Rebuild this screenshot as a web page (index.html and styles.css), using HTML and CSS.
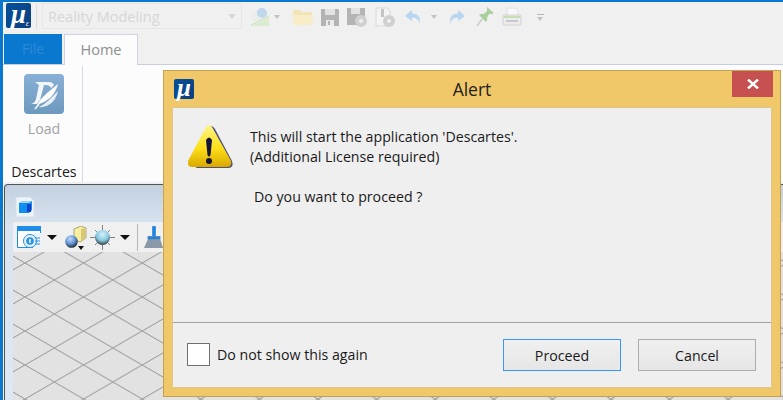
FILE: index.html
```html
<!DOCTYPE html>
<html lang="en">
<head>
<meta charset="utf-8">
<title>Alert</title>
<link rel="stylesheet" href="styles.css">
</head>
<body>
<div class="app">
  <div class="qat">
    <div class="logo logo-main"><span class="mu">μ</span><span class="eps">ε</span></div>
    <div class="qat-sep"></div>
    <div class="combo"><span>Reality Modeling</span><i class="combo-caret"></i></div>
    <div class="qat-icons">
      <svg class="ic w20" viewBox="0 0 20 20"><path d="M1 19 L19 10 V19Z" fill="#dcecd0"/><path d="M1 18L19 9" stroke="#c6deb6"/><path d="M2 7l6-2M2 10l6-2M3 13l6-2" stroke="#e2ebde" stroke-width="1.300"/><circle cx="12" cy="6" r="5" fill="#c0d7ec"/></svg>
      <i class="caret c1"></i>
      <svg class="ic w20 m1" viewBox="0 0 20 20"><path d="M0 4q0-1 1-1h6l2 2h9q1 0 1 1v11H1Z" fill="#f3e3b8"/><path d="M0 8h20v8q0 2-2 2H2q-2 0-2-2Z" fill="#f8ecc9"/></svg>
      <svg class="ic w20 m2" viewBox="0 0 20 20"><path d="M1 2h17l1 1v16H1Z" fill="#b4b4b4"/><path d="M5 2h10v6H5Z" fill="#e2e2e2"/><path d="M6 13h8v6H6Z" fill="#ececec"/><path d="M8 14h2v4H8Z" fill="#b4b4b4"/></svg>
      <svg class="ic w20 m3" viewBox="0 0 20 20"><path d="M0 1h18v17H0Z" fill="#b4b4b4"/><path d="M4 1h9v6H4Z" fill="#e2e2e2"/><circle cx="14" cy="14" r="6" fill="#d0d0d0"/><circle cx="14" cy="14" r="2" fill="#f0f0f0"/></svg>
      <svg class="ic w20 m4" viewBox="0 0 20 20"><path d="M1 1h11l3 3v15H1Z" fill="#f4f4f4" stroke="#d8d8d8"/><path d="M6 2h3v8H6Z" fill="#c4c4c4"/><circle cx="14" cy="14" r="6" fill="#d0d0d0"/><circle cx="14" cy="14" r="2" fill="#f0f0f0"/></svg>
      <svg class="ic w16 m5" viewBox="0 0 16 16"><path d="M7 1 L0 7 L7 12 V8.500 Q13 8 15 15 Q16 4 7 4.500Z" fill="#b8d6ef"/></svg>
      <i class="caret c2"></i>
      <svg class="ic w16 m6" viewBox="0 0 16 16"><path d="M9 1 L16 7 L9 12 V8.500 Q3 8 1 15 Q0 4 9 4.500Z" fill="#b8d6ef"/></svg>
      <svg class="ic w20 m7" viewBox="0 0 20 20"><path d="M11 0l7 6-2 1-3 0-2 4q1 2-1 4L3 8q3-2 5-1l3-3Z" fill="#abd09e"/><path d="M6 12L1 19" stroke="#d0d0d0" stroke-width="2"/></svg>
      <svg class="ic w20 m8" viewBox="0 0 20 20"><path d="M5 1h8l3 3v5H5Z" fill="#f8f8f8" stroke="#e0e0e0"/><path d="M1 9q0-1 1-1h16q1 0 1 1v8q0 1-1 1H2q-1 0-1-1Z" fill="#ececec" stroke="#d2d2d2"/><path d="M2 9h16v2H2Z" fill="#c4dfb6"/><path d="M4 14h12" stroke="#bbb" stroke-width="1.500"/></svg>
      <div class="overflow"><b></b><i class="caret c3"></i></div>
    </div>
  </div>
  <div class="tabs">
    <div class="tab-file">File</div>
    <div class="tab-home">Home</div>
  </div>
  <div class="ribbon">
    <div class="group">
      <div class="load-btn">
        <svg class="load-ic" viewBox="0 0 40 40"><defs><linearGradient id="lg" x1="0" y1="0" x2="0" y2="1"><stop offset="0" stop-color="#88b0d6"/><stop offset="1" stop-color="#6e99bf"/></linearGradient></defs><rect width="40" height="40" rx="4" fill="url(#lg)"/><path d="M11 8h13q5 0 6 3l-3 3q-1-3-5-3h-2l-4 15-3 4H7q4-1 5-5l3-14Z" fill="#f4f7fa"/><path d="M13 31q4-7 10-12l11-9q-2 8-8 14-6 5-13 7Z" fill="#fff"/><path d="M15 33q6-3 10-7l9-9q-2 9-8 13-5 4-11 3Z" fill="#e6edf4"/><path d="M11 35l4-5" stroke="#fff" stroke-width="1.500"/></svg>
        <div class="load-text">Load</div>
      </div>
      <div class="group-title">Descartes</div>
    </div>
  </div>
  <div class="workspace">
    <div class="view-head">
      <svg class="cube" viewBox="0 0 20 20"><path d="M1 0h14l4 4v16H1Z" fill="#eef3f8" stroke="#d8e0e8"/><path d="M4 6l4-2h9v9l-3 3H4Z" fill="#0f8ff0"/><path d="M12 7h4v8h-4Z" fill="#1640c8"/><path d="M4 6l4-2h9l-3 2Z" fill="#9cd4f8"/></svg>
    </div>
    <div class="view-body">
      <div class="view-tools">
        <svg class="vt v1" viewBox="0 0 25 22"><path d="M.5 1.500h23v20H.5Z" fill="#fff" stroke="#1e8de8"/><path d="M0 0h24v5H0Z" fill="#1e8de8"/><path d="M16 7h8v15H16Z" fill="#eaf4fc"/><circle cx="13" cy="15" r="6.500" fill="#e6f3fd" stroke="#2c90e0"/><circle cx="13" cy="15" r="3.800" fill="#2a8fe6"/><path d="M13 13v4" stroke="#fff" stroke-width="1.500"/><path d="M18 12h5M18 15h5M18 18h5" stroke="#2c90e0"/></svg>
        <i class="drop d1"></i>
        <svg class="vt v2" viewBox="0 0 22 22"><defs><radialGradient id="sg" cx=".4" cy=".3" r=".75"><stop offset="0" stop-color="#c4dcf6"/><stop offset=".55" stop-color="#5b90d0"/><stop offset="1" stop-color="#161616"/></radialGradient><radialGradient id="sb" cx=".5" cy=".3" r=".75"><stop offset="0" stop-color="#d8f4fa"/><stop offset=".55" stop-color="#86c6de"/><stop offset="1" stop-color="#222"/></radialGradient></defs><path d="M9 3l7-3 5 2v10l-6 4-6-3Z" fill="#f8eea0" stroke="#77724a" stroke-width=".6"/><path d="M16 3l5-1v10l-5 4Z" fill="#d6c878"/><circle cx="6.500" cy="15.500" r="6.300" fill="url(#sg)"/></svg>
        <i class="drop d2"></i>
        <svg class="vt v3" viewBox="0 0 25 25"><path d="M12.500 0v25M0 12.500h25M5 5l15 15M20 5L5 20" stroke="#666" stroke-width=".8"/><circle cx="12.500" cy="12.500" r="7.500" fill="url(#sb)"/></svg>
        <i class="drop d3"></i>
        <div class="tool-sep"></div>
        <svg class="vt v4" viewBox="0 0 22 25"><path d="M9 0h4v11H9Z" fill="#1d84e0"/><path d="M4 11h14v4H4Z" fill="#2f7fc8"/><path d="M4 15h14l3 9H0Z" fill="#8b98a8"/></svg>
      </div>
      <svg class="grid" width="100%" height="100%"><defs><pattern id="gp" x="12" y="-23" width="58.600" height="34" patternUnits="userSpaceOnUse"><path d="M0 0L58.600 34M0 34L58.600 0" stroke="#999" stroke-width="1" fill="none"/></pattern></defs><rect width="100%" height="100%" fill="url(#gp)"/></svg>
    </div>
  </div>
</div>

<section class="dialog">
  <header class="dlg-title">
    <div class="logo logo-small"><span class="mu">μ</span></div>
    <h1>Alert</h1>
    <div class="close"><svg viewBox="0 0 12 10" class="close-x"><path d="M1 .5L11 9.500M11 .5L1 9.500" stroke="#fff" stroke-width="2.400"/></svg></div>
  </header>
  <div class="dlg-inner">
    <div class="dlg-body">
      <svg class="warn" viewBox="0 0 46 46"><defs><linearGradient id="wg" x1="0" y1="0" x2="0" y2="1"><stop offset="0" stop-color="#fff488"/><stop offset=".55" stop-color="#fde018"/><stop offset="1" stop-color="#d9a800"/></linearGradient></defs><path d="M23 2q2 0 4 3l17 32q2 6-3 7H8z" fill="#50507a"/><path d="M18 3q3-4 6 0l19 34q1 6-4 6H4q-5 0-4-6Z" fill="url(#wg)"/><path d="M18 16q3-5 6 0l-1.500 15q-1.500 3-3 0Z" fill="#14143c"/><circle cx="21" cy="37" r="3" fill="#14143c"/></svg>
      <div class="msg">
        <p>This will start the application 'Descartes'.</p>
        <p>(Additional License required)</p>
        <p class="question">Do you want to proceed ?</p>
      </div>
    </div>
    <footer class="dlg-foot">
      <label class="check"><span class="box"></span><span>Do not show this again</span></label>
      <div class="btns">
        <button class="btn btn-primary">Proceed</button>
        <button class="btn">Cancel</button>
      </div>
    </footer>
  </div>
</section>
</body>
</html>
```

FILE: styles.css
```css
* { box-sizing: border-box; }
html, body { margin: 0; padding: 0; }
body {
  width: 783px; height: 400px; overflow: hidden; position: relative;
  font-family: "Open Sans", "Noto Sans", sans-serif;
  background: #f0f0f0;
}
.app {
  width: 783px; height: 400px;
  display: flex; flex-direction: column;
  border-top: 2px solid #0b78d0;
  border-left: 3px solid #0b78d0;
}
.qat { height: 32px; display: flex; align-items: flex-start; padding: 1px 0 0 3px; background: #f0f0f0; }
.logo {
  background: linear-gradient(135deg, #06509a, #0b3f7e);
  position: relative; color: #fff; border-radius: 2px; flex: none;
  display: flex; justify-content: center; align-items: flex-start;
}
.logo-main { width: 25px; height: 25px; }
.logo-small { width: 20px; height: 20px; }
.mu {
  font-family: "Liberation Serif", serif; font-style: italic; font-weight: 700;
  color: #fff; display: block;
}
.logo-main .mu { font-size: 27px; line-height: 22px; }
.logo-small .mu { font-size: 25px; line-height: 18px; }
.eps { position: absolute; right: 2px; bottom: 0; font: italic 8px/9px "Liberation Serif", serif; }
.qat-sep { width: 1px; height: 25px; background: #dcdcdc; margin: 1px 5px 0 5px; }
.combo {
  width: 200px; height: 26px; border: 1px solid #e6e6e6; background: #f0f0f0;
  display: flex; align-items: center; justify-content: space-between;
  padding: 0 5px; color: #d6d6d6; font-size: 14.500px;
}
.combo-caret { width: 0; height: 0; border: 4px solid transparent; border-top: 5px solid #d8d8d8; border-bottom: 0; }
.qat-icons { display: flex; align-items: center; margin-left: 8px; height: 28px; }
.ic { display: block; flex: none; }
.w20 { width: 20px; height: 20px; }
.w16 { width: 16px; height: 16px; }
.caret { display: block; width: 0; height: 0; border: 3px solid transparent; border-top: 4px solid #c2c2c2; border-bottom: 0; flex: none; }
.c1 { margin-left: 4px; }
.m1 { margin-left: 13px; }
.m2 { margin-left: 7px; }
.m3 { margin-left: 7px; }
.m4 { margin-left: 8px; }
.m5 { margin-left: 10px; }
.c2 { margin-left: 10px; }
.m6 { margin-left: 12px; }
.m7 { margin-left: 11px; }
.m8 { margin-left: 6px; }
.overflow { margin-left: 14px; width: 8px; display: flex; flex-direction: column; align-items: center; gap: 2px; }
.overflow b { display: block; width: 7px; height: 1px; background: #b8b8b8; }
.tabs { height: 31px; display: flex; align-items: stretch; padding-left: 1px; background: #f0f0f0; border-bottom: 1px solid #c8cce0; flex: none; }
.tab-file { width: 58px; height: 30px; background: #0b78d0; color: #2c8ad6; font-size: 14px; line-height: 30px; text-align: center; }
.tab-home {
  width: 74px; height: 31px; margin-left: 2px; background: #fcfcfc; color: #8f8f8f;
  border: 1px solid #d0d3e4; border-bottom: 0; font-size: 14.500px; line-height: 30px; text-align: center;
}
.ribbon { height: 117px; background: #fcfcfc; flex: none; padding-top: 1px; }
.group { width: 80px; height: 116px; border-right: 1px solid #d6d6e4; display: flex; flex-direction: column; align-items: center; justify-content: space-between; padding-left: 3px; }
.load-btn { display: flex; flex-direction: column; align-items: center; padding-top: 8px; }
.load-ic { width: 40px; height: 40px; display: block; }
.load-text { color: #a3a3a3; font-size: 14.200px; line-height: 20px; margin-top: 5px; }
.group-title { color: #202020; font-size: 14.200px; line-height: 20px; margin-left: 0; white-space: nowrap; }
.workspace {
  flex: 1; min-height: 0; margin-left: 1px; margin-top: 2px;
  border: 1px solid #555; border-right: 0; border-bottom: 0; border-radius: 4px 0 0 0;
  background: linear-gradient(#c2d0df, #d9e4f0 40px, #dce7f3);
  display: flex; flex-direction: column; padding-left: 8px;
}
.view-head { height: 37px; flex: none; padding: 12px 0 0 2px; }
.cube { width: 20px; height: 20px; display: block; }
.view-body { flex: 1; min-height: 0; display: flex; flex-direction: column; }
.view-tools { height: 30px; background: #f0f0f0; flex: none; display: flex; align-items: center; padding-left: 4px; }
.vt { display: block; flex: none; }
.v1 { width: 25px; height: 22px; }
.v2 { width: 22px; height: 22px; margin-left: 8px; }
.v3 { width: 25px; height: 25px; margin-left: 6px; }
.v4 { width: 20px; height: 25px; margin-left: 6px; }
.drop { display: block; width: 0; height: 0; border: 5px solid transparent; border-top: 5px solid #111; border-bottom: 0; flex: none; }
.d1 { margin: 0 0 0 5px; }
.d2 { border-width: 3px; border-top-width: 4px; margin: 24px 0 0 -9px; align-self: flex-start; }
.d3 { margin-left: 5px; }
.tool-sep { width: 1px; height: 27px; background: #b5b5b5; margin-left: 7px; }
.grid { display: block; flex: 1; min-height: 0; background: #e2e2e2; }

.dialog {
  position: absolute; left: 163px; top: 70px; width: 618px; height: 327px;
  background: #f0c869; border: 1px solid #c4a24f;
  display: flex; flex-direction: column;
}
.dlg-title { height: 36px; flex: none; position: relative; display: flex; align-items: flex-start; padding: 8px 0 0 10px; }
.dlg-title h1 { position: absolute; left: 0; width: 616px; top: 6px; margin: 0; text-align: center; font-weight: 400; font-size: 17.500px; line-height: 24px; color: #222; }
.close { position: absolute; top: 0; right: 7px; width: 41px; height: 26px; background: #c75050; display: flex; align-items: center; justify-content: center; }
.close-x { width: 12px; height: 10px; display: block; }
.dlg-inner {
  margin: 0 8px 8px 8px; flex: 1; min-height: 0; background: #efefef;
  display: flex; flex-direction: column; border: 1px solid #dcc68c;
}
.dlg-body { flex: 1; display: flex; align-items: flex-start; padding: 16px 0 0 15px; border-bottom: 1px solid #a0a0a0; min-height: 0; }
.warn { width: 46px; height: 46px; display: block; flex: none; margin-right: 16px; }
.msg { color: #1a1a1a; font-size: 14.200px; line-height: 20px; padding-top: 3px; }
.msg p { margin: 0; }
.msg .question { margin: 20px 0 0 4px; }
.dlg-foot { height: 64px; flex: none; display: flex; align-items: flex-start; justify-content: space-between; padding: 16px 15px 0 14px; }
.check { display: flex; align-items: center; gap: 7px; font-size: 14.200px; color: #1a1a1a; margin-top: 4px; }
.box { width: 23px; height: 23px; background: #fff; border: 1px solid #707070; display: block; }
.btns { display: flex; gap: 17px; }
.btn {
  width: 118px; height: 32px; padding: 0; font: inherit; font-size: 14.200px; color: #1a1a1a;
  border: 1px solid #adadad; background: linear-gradient(#f0f0f0, #e6e6e6);
}
.btn-primary { border-color: #3399ff; }
```
